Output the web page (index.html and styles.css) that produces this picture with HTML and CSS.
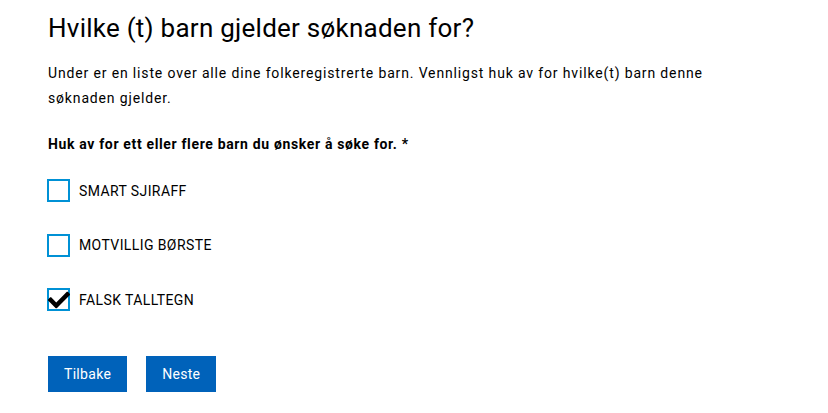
FILE: index.html
```html
<!DOCTYPE html>
<html lang="no">
<head>
    <meta charset="UTF-8">
    <meta name="viewport" content="width=device-width, initial-scale=1.0">
    <title>Velg barn</title>
    <link rel="stylesheet" href="styles.css">
</head>
<body>
    <div class="page">
        <h1>Hvilke (t) barn gjelder søknaden for?</h1>
        <p class="intro">Under er en liste over alle dine folkeregistrerte barn. Vennligst huk av for hvilke(t) barn denne søknaden gjelder.</p>

        <fieldset class="children">
            <legend>Huk av for ett eller flere barn du ønsker å søke for. *</legend>
            <label class="check">
                <input type="checkbox">
                <span class="box"><svg class="tick" viewBox="0 60 512 392"><path d="M173.9 439.4l-166.4-166.4c-10-10-10-26.2 0-36.2l36.2-36.2c10-10 26.2-10 36.2 0L192 312.7 432.1 72.6c10-10 26.2-10 36.2 0l36.2 36.2c10 10 10 26.2 0 36.2l-294.4 294.4c-10 10-26.2 10-36.2 0z"/></svg></span>
                <span class="name">SMART SJIRAFF</span>
            </label>
            <label class="check">
                <input type="checkbox">
                <span class="box"><svg class="tick" viewBox="0 60 512 392"><path d="M173.9 439.4l-166.4-166.4c-10-10-10-26.2 0-36.2l36.2-36.2c10-10 26.2-10 36.2 0L192 312.7 432.1 72.6c10-10 26.2-10 36.2 0l36.2 36.2c10 10 10 26.2 0 36.2l-294.4 294.4c-10 10-26.2 10-36.2 0z"/></svg></span>
                <span class="name">MOTVILLIG BØRSTE</span>
            </label>
            <label class="check">
                <input type="checkbox" checked>
                <span class="box"><svg class="tick" viewBox="0 60 512 392"><path d="M173.9 439.4l-166.4-166.4c-10-10-10-26.2 0-36.2l36.2-36.2c10-10 26.2-10 36.2 0L192 312.7 432.1 72.6c10-10 26.2-10 36.2 0l36.2 36.2c10 10 10 26.2 0 36.2l-294.4 294.4c-10 10-26.2 10-36.2 0z"/></svg></span>
                <span class="name">FALSK TALLTEGN</span>
            </label>
        </fieldset>

        <div class="buttons">
            <button>Tilbake</button>
            <button>Neste</button>
        </div>
    </div>
</body>
</html>
```

FILE: styles.css
```css
body {
    margin: 0;
    background-color: white;
    color: #000;
    font-family: Roboto, "Liberation Sans", sans-serif;
}
.page {
    width: 720px;
    padding: 10px 0 0 48px;
}
h1 {
    margin: 0;
    font-size: 26px;
    font-weight: 400;
    line-height: 36px;
    letter-spacing: 0.25px;
}
.intro {
    margin: 15px 0 0;
    font-size: 14px;
    line-height: 25px;
    letter-spacing: 0.85px;
}
.children {
    border: none;
    margin: 23px 0 0;
    padding: 0;
}
.children legend {
    padding: 0;
    font-size: 14px;
    font-weight: 700;
    line-height: 20px;
    letter-spacing: 0.65px;
    margin-bottom: 25px;
}
.check {
    display: flex;
    align-items: center;
    gap: 9px;
    height: 23px;
    margin-bottom: 31.5px;
    cursor: pointer;
    font-size: 14px;
    letter-spacing: 0.4px;
}
.check:last-of-type {
    margin-bottom: 0;
}
.check input {
    display: none;
}
.box {
    display: flex;
    align-items: center;
    justify-content: center;
    width: 19px;
    height: 19px;
    margin-left: -1px;
    border: 2px solid #0091d5;
}
.tick {
    display: none;
    flex: none;
    width: 22px;
    height: 18px;
    margin-top: 1px;
    fill: black;
}
.check input:checked + .box .tick {
    display: block;
}
.buttons {
    display: flex;
    gap: 19px;
    margin-top: 45px;
}
button {
    background-color: #0062ba;
    color: white;
    height: 36px;
    padding: 0 16px;
    border: none;
    font-family: inherit;
    font-size: 14px;
    letter-spacing: 0.3px;
    cursor: pointer;
}
button:hover {
    background-color: #004b8e;
}
```
